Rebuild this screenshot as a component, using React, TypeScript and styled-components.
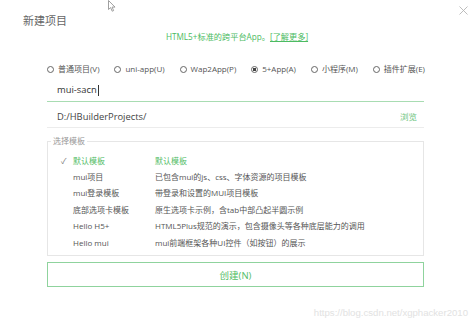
import styled, { createGlobalStyle } from "styled-components";

const GlobalStyle = createGlobalStyle`
  html, body {
    margin: 0;
    padding: 0;
    background: #ffffff;
  }
  body {
    font-family: "Open Sans", "Noto Sans CJK SC", sans-serif;
  }
`;

const projectTypes = [
  { label: "普通项目(V)", checked: false },
  { label: "uni-app(U)", checked: false },
  { label: "Wap2App(P)", checked: false },
  { label: "5+App(A)", checked: true },
  { label: "小程序(M)", checked: false },
  { label: "插件扩展(E)", checked: false },
];

const templates = [
  { name: "默认模板", desc: "默认模板", selected: true },
  { name: "mui项目", desc: "已包含mui的js、css、字体资源的项目模板" },
  { name: "mui登录模板", desc: "带登录和设置的MUI项目模板" },
  { name: "底部选项卡模板", desc: "原生选项卡示例，含tab中部凸起半圆示例" },
  { name: "Hello H5+", desc: "HTML5Plus规范的演示，包含摄像头等各种底层能力的调用" },
  { name: "Hello mui", desc: "mui前端框架各种UI控件（如按钮）的展示" },
];

export default function App() {
  return (
    <Page>
      <GlobalStyle />
      <Header>
        <Title>新建项目</Title>
        <Close>
          <svg width="9" height="9" viewBox="0 0 9 9">
            <path d="M0.5 0.5 L8.5 8.5 M8.5 0.5 L0.5 8.5" stroke="#b5b5b5" strokeWidth="0.9" fill="none" />
          </svg>
        </Close>
      </Header>
      <Subtitle>
        HTML5+标准的跨平台App。<Link>[了解更多]</Link>
      </Subtitle>
      <Body>
        <RadioRow>
          {projectTypes.map((t) => (
            <RadioItem key={t.label}>
              <RadioCircle $checked={t.checked} />
              {t.label}
            </RadioItem>
          ))}
        </RadioRow>
        <NameField>
          mui-sacn<Caret />
        </NameField>
        <PathField>
          <span>D:/HBuilderProjects/</span>
          <Browse>浏览</Browse>
        </PathField>
        <TemplateBox>
          <Legend>选择模板</Legend>
          {templates.map((t) => (
            <TemplateRow key={t.name} $selected={!!t.selected}>
              <Check>{t.selected ? "✓" : ""}</Check>
              <span>{t.name}</span>
              <span>{t.desc}</span>
            </TemplateRow>
          ))}
        </TemplateBox>
        <CreateButton>创建(N)</CreateButton>
      </Body>
      <Cursor>
        <svg width="8" height="12" viewBox="0 0 8 12">
          <path d="M0.5 0.5 L0.5 9.5 L2.6 7.6 L4.2 11.2 L5.6 10.6 L4.1 7.1 L7 7.1 Z" fill="#fff" stroke="#888" strokeWidth="0.8" />
        </svg>
      </Cursor>
      <Watermark>https://blog.csdn.net/xgphacker2010</Watermark>
    </Page>
  );
}

const Page = styled.div`
  position: relative;
  width: 474px;
  height: 323px;
  background: #ffffff;
  overflow: hidden;
`;

const Header = styled.div`
  display: flex;
  justify-content: space-between;
  align-items: flex-start;
  height: 28px;
  padding: 6px 6px 0 23px;
  box-sizing: border-box;
`;

const Title = styled.div`
  margin-top: 8px;
  font-size: 11px;
  line-height: 14px;
  color: #666;
`;

const Close = styled.div`
  width: 9px;
  height: 9px;
  line-height: 0;
`;

const Subtitle = styled.div`
  margin-top: 3px;
  text-align: center;
  font-size: 8.2px;
  line-height: 12px;
  color: #4cbb62;
`;

const Link = styled.span`
  text-decoration: underline;
`;

const Body = styled.div`
  margin: 0 0 0 47px;
  width: 377px;
`;

const RadioRow = styled.div`
  display: flex;
  justify-content: space-between;
  margin-top: 20px;
  height: 12px;
  width: 378px;
`;

const RadioItem = styled.label`
  display: flex;
  align-items: center;
  gap: 4px;
  font-size: 8px;
  line-height: 12px;
  color: #555;
  white-space: nowrap;
`;

const RadioCircle = styled.span<{ $checked: boolean }>`
  width: 7px;
  height: 7px;
  border: 1px solid #666;
  border-radius: 50%;
  box-sizing: border-box;
  background: ${(p) => (p.$checked ? "radial-gradient(circle, #444 0 1.6px, #fff 2px)" : "#fff")};
`;

const NameField = styled.div`
  display: flex;
  align-items: center;
  margin-top: 9px;
  padding: 0 0 5px 10px;
  height: 12px;
  font-size: 9.4px;
  line-height: 12px;
  color: #333;
  border-bottom: 1px solid #a8dcb2;
`;

const Caret = styled.span`
  width: 1px;
  height: 11px;
  margin-left: 1px;
  background: #333;
`;

const PathField = styled.div`
  display: flex;
  justify-content: space-between;
  align-items: center;
  margin-top: 9px;
  padding: 0 7px 4px 10px;
  height: 12px;
  font-size: 9.4px;
  line-height: 12px;
  color: #444;
  border-bottom: 1px solid #ececec;
`;

const Browse = styled.span`
  font-size: 8.5px;
  color: #6cc47c;
`;

const TemplateBox = styled.fieldset`
  margin: 8px 0 0 0;
  padding: 6px 0 5px 0;
  border: 1px solid #e6e6e6;
  min-width: 0;
`;

const Legend = styled.legend`
  margin-left: 3px;
  padding: 0 2px;
  font-size: 8px;
  line-height: 10px;
  color: #999;
`;

const TemplateRow = styled.div<{ $selected: boolean }>`
  display: grid;
  grid-template-columns: 25px 82px 1fr;
  height: 16.4px;
  align-items: center;
  font-size: 8px;
  color: ${(p) => (p.$selected ? "#52bd66" : "#555")};
  white-space: nowrap;
`;

const Check = styled.span`
  padding-left: 13px;
  font-size: 8px;
  color: #777;
`;

const CreateButton = styled.div`
  display: flex;
  align-items: center;
  justify-content: center;
  margin-top: 6px;
  height: 25px;
  border: 1px solid #8fd39d;
  box-sizing: border-box;
  font-size: 9.5px;
  color: #52bd66;
`;

const Cursor = styled.div`
  position: absolute;
  left: 108px;
  top: 0px;
  line-height: 0;
`;

const Watermark = styled.div`
  position: absolute;
  right: 6px;
  bottom: 5px;
  font-size: 9.6px;
  color: #e2e2e2;
  font-family: "Liberation Sans", sans-serif;
`;
